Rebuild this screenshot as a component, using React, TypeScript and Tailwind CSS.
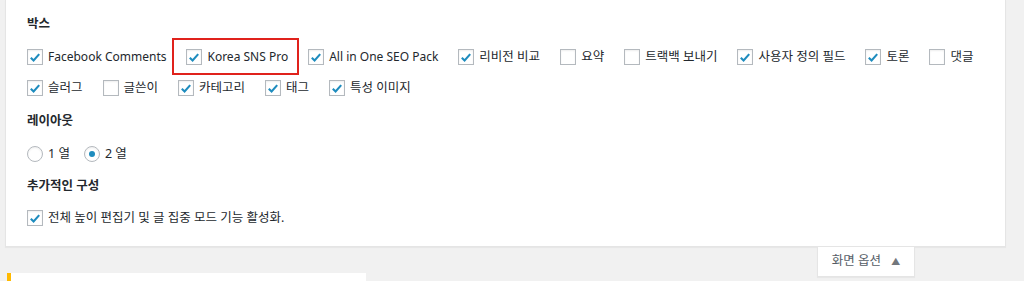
import React from "react";

const isKo = (s: string) => /[\uac00-\ud7a3]/.test(s);

const Check = ({ checked }: { checked: boolean }) => (
  <span className="relative inline-flex h-4 w-4 shrink-0 items-center justify-center border border-[#b4b9be] bg-white shadow-[inset_0_1px_2px_rgba(0,0,0,0.07)]">
    {checked && (
      <svg viewBox="0 0 16 16" className="h-[15px] w-[15px]">
        <path d="M3.2 8.2 L6.4 11.4 L12.8 4.2" fill="none" stroke="#1e8cbe" strokeWidth="2.4" strokeLinecap="butt" strokeLinejoin="miter" />
      </svg>
    )}
  </span>
);

const Radio = ({ checked }: { checked: boolean }) => (
  <span className="inline-flex h-4 w-4 shrink-0 items-center justify-center rounded-full border border-[#b4b9be] bg-white shadow-[inset_0_1px_2px_rgba(0,0,0,0.07)]">
    {checked && <span className="h-[6px] w-[6px] rounded-full bg-[#1e8cbe]" />}
  </span>
);

const Text = ({ t }: { t: string }) => (
  <span className={isKo(t) ? "whitespace-nowrap text-[12.5px]" : "whitespace-nowrap text-[12px]"}>{t}</span>
);

const Item = ({ label, checked, boxed }: { label: string; checked: boolean; boxed?: boolean }) => (
  <label className="relative mr-5 inline-flex h-5 shrink-0 items-center gap-[5px]">
    <Check checked={checked} />
    <Text t={label} />
    {boxed && (
      <span className="pointer-events-none absolute -bottom-[8px] -left-[14px] -right-[11px] -top-[9px] border-2 border-[#e0221c]" />
    )}
  </label>
);

export default function App() {
  const row1: [string, boolean, boolean?][] = [
    ["Facebook Comments", true],
    ["Korea SNS Pro", true, true],
    ["All in One SEO Pack", true],
    ["리비전 비교", true],
    ["요약", false],
    ["트랙백 보내기", false],
    ["사용자 정의 필드", true],
    ["토론", true],
    ["댓글", false],
  ];
  const row2: [string, boolean][] = [
    ["슬러그", true],
    ["글쓴이", false],
    ["카테고리", true],
    ["태그", true],
    ["특성 이미지", true],
  ];
  return (
    <div
      className="h-[281px] w-[1024px] overflow-hidden bg-[#f1f1f1] text-[12px] text-[#23282d]"
      style={{ fontFamily: '"Noto Sans", "Noto Sans CJK KR", sans-serif' }}
    >
      <div className="ml-[5px] w-[1001px] border border-t-0 border-[#e5e5e5] bg-white pb-[18px] pl-[21px] pt-[14px] shadow-[0_1px_1px_rgba(0,0,0,0.04)]">
        <div className="h-5 text-[12.5px] font-semibold leading-5">박스</div>
        <div className="mt-[13px] flex flex-col gap-[11px]">
          <div className="flex">
            {row1.map(([l, c, b]) => (
              <Item key={l} label={l} checked={c} boxed={b} />
            ))}
          </div>
          <div className="flex">
            {row2.map(([l, c]) => (
              <Item key={l} label={l} checked={c} />
            ))}
          </div>
        </div>
        <div className="mt-[13px] h-5 text-[12.5px] font-semibold leading-5">레이아웃</div>
        <div className="mt-[13px] flex h-5 items-center">
          <label className="mr-[14px] inline-flex items-center gap-[5px]">
            <Radio checked={false} />
            <Text t="1 열" />
          </label>
          <label className="inline-flex items-center gap-[5px]">
            <Radio checked={true} />
            <Text t="2 열" />
          </label>
        </div>
        <div className="mt-[12px] h-5 text-[12.5px] font-semibold leading-5">추가적인 구성</div>
        <div className="mt-[12px] flex h-5 items-center">
          <label className="inline-flex items-center gap-[5px]">
            <Check checked={true} />
            <Text t="전체 높이 편집기 및 글 집중 모드 기능 활성화." />
          </label>
        </div>
      </div>
      <div className="flex items-start">
        <div className="ml-[7px] mt-[26px] h-[40px] w-[359px] border-l-4 border-[#ffb900] bg-white" />
        <div className="ml-auto mr-[109px] flex h-[30px] w-[98px] items-center justify-center gap-[10px] border border-t-0 border-[#e5e5e5] bg-white text-[12.5px] text-[#555d66] shadow-[0_1px_1px_rgba(0,0,0,0.04)]">
          <span>화면 옵션</span>
          <span className="text-[9px] text-[#72777c]">▲</span>
        </div>
      </div>
    </div>
  );
}
